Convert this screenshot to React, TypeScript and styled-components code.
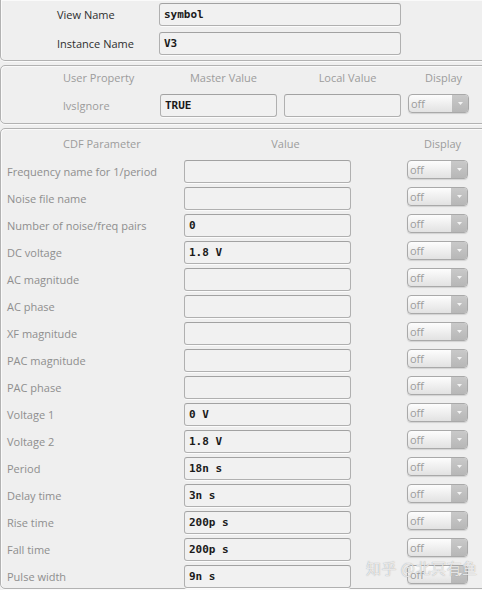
import React from "react";
import styled, { createGlobalStyle } from "styled-components";

type Row = { label: string; value?: string };

const rows: Row[] = [
    { label: "Frequency name for 1/period" },
    { label: "Noise file name" },
    { label: "Number of noise/freq pairs", value: "0" },
    { label: "DC voltage", value: "1.8 V" },
    { label: "AC magnitude" },
    { label: "AC phase" },
    { label: "XF magnitude" },
    { label: "PAC magnitude" },
    { label: "PAC phase" },
    { label: "Voltage 1", value: "0 V" },
    { label: "Voltage 2", value: "1.8 V" },
    { label: "Period", value: "18n s" },
    { label: "Delay time", value: "3n s" },
    { label: "Rise time", value: "200p s" },
    { label: "Fall time", value: "200p s" },
    { label: "Pulse width", value: "9n s" },
];

const Select: React.FC = () => (
    <StyledSelect>
        <SelectText>off</SelectText>
        <SelectArrow>
            <svg width="5" height="3" viewBox="0 0 5 3">
                <path d="M0 0 L5 0 L2.5 3 Z" fill="#f4f4f4" />
            </svg>
        </SelectArrow>
    </StyledSelect>
);

export default function App() {
    return (
        <>
            <GlobalStyle />
            <Page>
                <TopPanel>
                    <NameRow>
                        <NameLabel>View Name</NameLabel>
                        <Field $width={242}>symbol</Field>
                    </NameRow>
                    <NameRow>
                        <NameLabel>Instance Name</NameLabel>
                        <Field $width={242}>V3</Field>
                    </NameRow>
                </TopPanel>

                <Panel>
                    <UserGrid>
                        <Header>User Property</Header>
                        <Header $center $shift={5}>Master Value</Header>
                        <Header $center $shift={5}>Local Value</Header>
                        <Header $center $shift={5}>Display</Header>
                        <Header>lvsIgnore</Header>
                        <Field>TRUE</Field>
                        <Field />
                        <Select />
                    </UserGrid>
                </Panel>

                <Panel>
                    <CdfHead>
                        <Header>CDF Parameter</Header>
                        <Header $center $shift={18}>Value</Header>
                        <span />
                        <Header $center $shift={5}>Display</Header>
                    </CdfHead>
                    <CdfList>
                        {rows.map((r) => (
                            <CdfRow key={r.label}>
                                <CdfLabel>{r.label}</CdfLabel>
                                <Field $width={167}>{r.value ?? ""}</Field>
                                <SelectSlot>
                                    <Select />
                                </SelectSlot>
                            </CdfRow>
                        ))}
                    </CdfList>
                </Panel>

                <Watermark>知乎 @北冥有鱼</Watermark>
            </Page>
        </>
    );
}

const GlobalStyle = createGlobalStyle`
    html, body {
        margin: 0;
        padding: 0;
        background: #efefef;
        overflow: hidden;
    }
    body {
        font-family: "Open Sans", "Liberation Sans", sans-serif;
        font-size: 11px;
    }
`;

const Page = styled.div`
    position: relative;
    width: 482px;
    height: 590px;
    overflow: hidden;
    display: flex;
    flex-direction: column;
    gap: 4px;
    background: #efefef;
`;

const Panel = styled.div`
    margin-right: -10px;
    border: 1px solid #b2b2b2;
    border-radius: 5px;
    box-shadow: inset 1px 1px 0 #fafafa, 0 1px 0 #fafafa;
`;

const TopPanel = styled(Panel)`
    border-top: none;
    border-radius: 0 0 5px 5px;
    padding: 3px 0 5px;
    display: flex;
    flex-direction: column;
    gap: 6px;
`;

const NameRow = styled.div`
    display: flex;
    align-items: center;
`;

const NameLabel = styled.span`
    width: 102px;
    padding-left: 56px;
    color: #2e2e2e;
`;

const Field = styled.div<{ $width?: number }>`
    box-sizing: border-box;
    ${(p) => (p.$width ? `width: ${p.$width}px;` : "")}
    height: 23px;
    padding: 0 4px;
    display: flex;
    align-items: center;
    border: 1px solid #b0b0b0;
    border-top-color: #a2a2a2;
    border-radius: 3px;
    background: #f1f1f1;
    box-shadow: 0 1px 0 #fbfbfb;
    font-family: "DejaVu Sans Mono", "Liberation Mono", monospace;
    font-weight: bold;
    font-size: 11px;
    color: #1a1a1a;
`;

const Header = styled.span<{ $center?: boolean; $shift?: number }>`
    color: #9c9c9c;
    text-align: ${(p) => (p.$center ? "center" : "left")};
    padding-left: ${(p) => (p.$shift ? p.$shift * 2 : 0)}px;
    white-space: nowrap;
    line-height: 14px;
`;

const UserGrid = styled.div`
    display: grid;
    grid-template-columns: 90px 117px 117px 61px;
    column-gap: 7px;
    row-gap: 9px;
    align-items: center;
    padding: 5px 0 6px 62px;
`;

const StyledSelect = styled.div`
    box-sizing: border-box;
    width: 61px;
    height: 19px;
    display: flex;
    align-self: start;
    border: 1px solid #a9a9a9;
    border-radius: 4px;
    overflow: hidden;
    background: linear-gradient(#fdfdfd, #e2e2e2);
    box-shadow: 0 1px 1px rgba(0, 0, 0, 0.12);
`;

const SelectText = styled.span`
    flex: 1;
    padding-left: 2px;
    line-height: 17px;
    color: #9c9c9c;
    font-size: 11px;
`;

const SelectArrow = styled.span`
    width: 16px;
    display: flex;
    align-items: center;
    justify-content: center;
    background: linear-gradient(#c9c9c9, #b7b7b7);
`;

const SelectSlot = styled.div`
    margin-left: 56px;
    align-self: flex-start;
`;

const CdfHead = styled.div`
    display: grid;
    grid-template-columns: 121px 167px 56px 61px;
    padding: 8px 0 9px 62px;
    align-items: center;
`;

const CdfList = styled.div`
    display: flex;
    flex-direction: column;
    gap: 4px;
`;

const CdfRow = styled.div`
    display: flex;
    align-items: center;
`;

const CdfLabel = styled.span`
    width: 177px;
    padding-left: 6px;
    color: #8e8e8e;
    white-space: nowrap;
`;

const Watermark = styled.div`
    position: absolute;
    left: 366px;
    top: 557px;
    font-family: "Noto Sans CJK SC", sans-serif;
    font-size: 15px;
    letter-spacing: 0.5px;
    color: rgba(255, 255, 255, 0.75);
    text-shadow: 0 0 1px rgba(110, 110, 110, 0.7);
    pointer-events: none;
`;
